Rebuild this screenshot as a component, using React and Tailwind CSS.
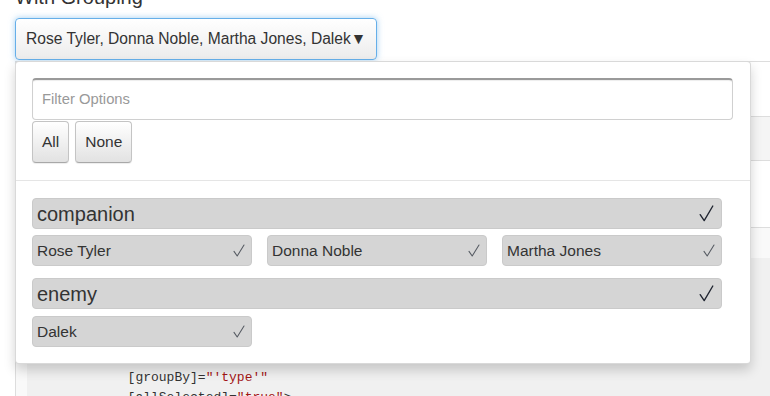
import React from "react";

const groups = [
  { name: "companion", items: ["Rose Tyler", "Donna Noble", "Martha Jones"] },
  { name: "enemy", items: ["Dalek"] },
];

function Check({ big }) {
  if (big) {
    return (
      <svg width="15" height="17" viewBox="0 0 15 17" className="shrink-0">
        <path d="M1.2 9.6 L5.2 15.6 L13.8 1" fill="none" stroke="#1f2430" strokeWidth="1.35" strokeLinecap="round" strokeLinejoin="round" />
      </svg>
    );
  }
  return (
    <svg width="12" height="13" viewBox="0 0 12 13" className="shrink-0">
      <path d="M1 7.4 L4.2 12 L11 1" fill="none" stroke="#555a62" strokeWidth="1.05" strokeLinecap="round" strokeLinejoin="round" />
    </svg>
  );
}

export default function App() {
  const codeLines = [
    { t: '<ss-multiselect-dropdown', v: null },
    { t: '    [options]=', v: '"myOptions"' },
    { t: '    [(ngModel)]=', v: '"optionsModel"' },
    { t: '    [texts]=', v: '"myTexts"' },
    { t: '    [settings]=', v: '"mySettings"' },
    { t: '            [groupBy]=', v: "\"'type'\"" },
    { t: '            [allSelected]=', v: '"true"', end: ">" },
  ];

  return (
    <div className="w-[770px] h-[396px] overflow-hidden bg-white text-[#333] font-['Liberation_Sans',Arial,sans-serif]">
      <div className="pl-[15px]">
        <h4 className="text-[20px] leading-[20px] font-normal mt-[-13px] text-[#333]">
          With Grouping
        </h4>
        <div className="relative mt-[11px] z-10">
          <button className="h-[42px] px-[10px] border border-[#66afe9] rounded-[4px] bg-gradient-to-b from-white to-[#ececec] shadow-[0_0_6px_rgba(102,175,233,0.6)] text-[15.6px] text-[#333] whitespace-nowrap">
            Rose Tyler, Donna Noble, Martha Jones, Dalek▼
          </button>
          <div className="absolute left-0 top-[43px] w-[736px] h-[303px] bg-white border border-[rgba(0,0,0,0.15)] rounded-[4px] shadow-[0_6px_12px_rgba(0,0,0,0.175)]">
            <div className="pt-[16px] pl-[16px] pr-[17px] pb-[17px] border-b border-[#e5e5e5]">
              <div className="h-[42px] w-full border border-[#d0d0d0] border-t-[#9a9a9a] border-t-2 rounded-[4px] shadow-[inset_0_1px_1px_rgba(0,0,0,0.075)] flex items-center pl-[9px] text-[14.8px] text-[#999]">
                Filter Options
              </div>
              <div className="flex gap-[6px] mt-[1px]">
                <button className="h-[42px] px-[9px] border border-[#c4c4c4] border-b-[#a8a8a8] rounded-[4px] bg-gradient-to-b from-white to-[#e2e2e2] shadow-[0_1px_1px_rgba(0,0,0,0.075)] text-[15.5px] text-[#333]">
                  All
                </button>
                <button className="h-[42px] px-[9px] border border-[#c4c4c4] border-b-[#a8a8a8] rounded-[4px] bg-gradient-to-b from-white to-[#e2e2e2] shadow-[0_1px_1px_rgba(0,0,0,0.075)] text-[15.5px] text-[#333]">
                  None
                </button>
              </div>
            </div>
            <div className="pt-[17px] pl-[16px]">
              {groups.map((g, gi) => (
                <div key={g.name} className={gi > 0 ? "mt-[12px]" : ""}>
                  <div className="w-[690px] h-[31px] flex items-center justify-between pl-[4px] pr-[7px] bg-[#d5d5d5] border border-[#cacaca] rounded-[4px]">
                    <span className="text-[20px] text-[#333]">{g.name}</span>
                    <Check big />
                  </div>
                  <div className={"grid grid-cols-3 gap-x-[15px] w-[690px] " + (gi > 0 ? "mt-[7px]" : "mt-[6px]")}>
                    {g.items.map((it) => (
                      <div
                        key={it}
                        className="h-[31px] flex items-center justify-between pl-[4px] pr-[6px] bg-[#d5d5d5] border border-[#cacaca] rounded-[4px]"
                      >
                        <span className="text-[15.5px] text-[#333]">{it}</span>
                        <Check />
                      </div>
                    ))}
                  </div>
                </div>
              ))}
            </div>
          </div>
        </div>
        <div className="mt-[1px] border-l border-[#ddd]">
          <div className="h-[55px] border-t border-[#ddd] bg-white" />
          <div className="h-[44px] border-t border-[#ddd] bg-[#f5f5f5]" />
          <div className="h-[67px] border-t border-[#ddd] bg-white" />
          <div className="border-t border-[#ddd] bg-[#f9f9f9] pt-[30px] pl-[11px]">
            <pre className="bg-[#f0f0f0] pt-[10px] pl-[7px] pb-[20px] text-[13px] leading-[20px] font-['Liberation_Mono',monospace] text-[#333]">
              {codeLines.map((l, i) => (
                <div key={i}>
                  {l.t}
                  {l.v && <span className="text-[#a31515]">{l.v}</span>}
                  {l.end}
                </div>
              ))}
            </pre>
          </div>
        </div>
      </div>
    </div>
  );
}
